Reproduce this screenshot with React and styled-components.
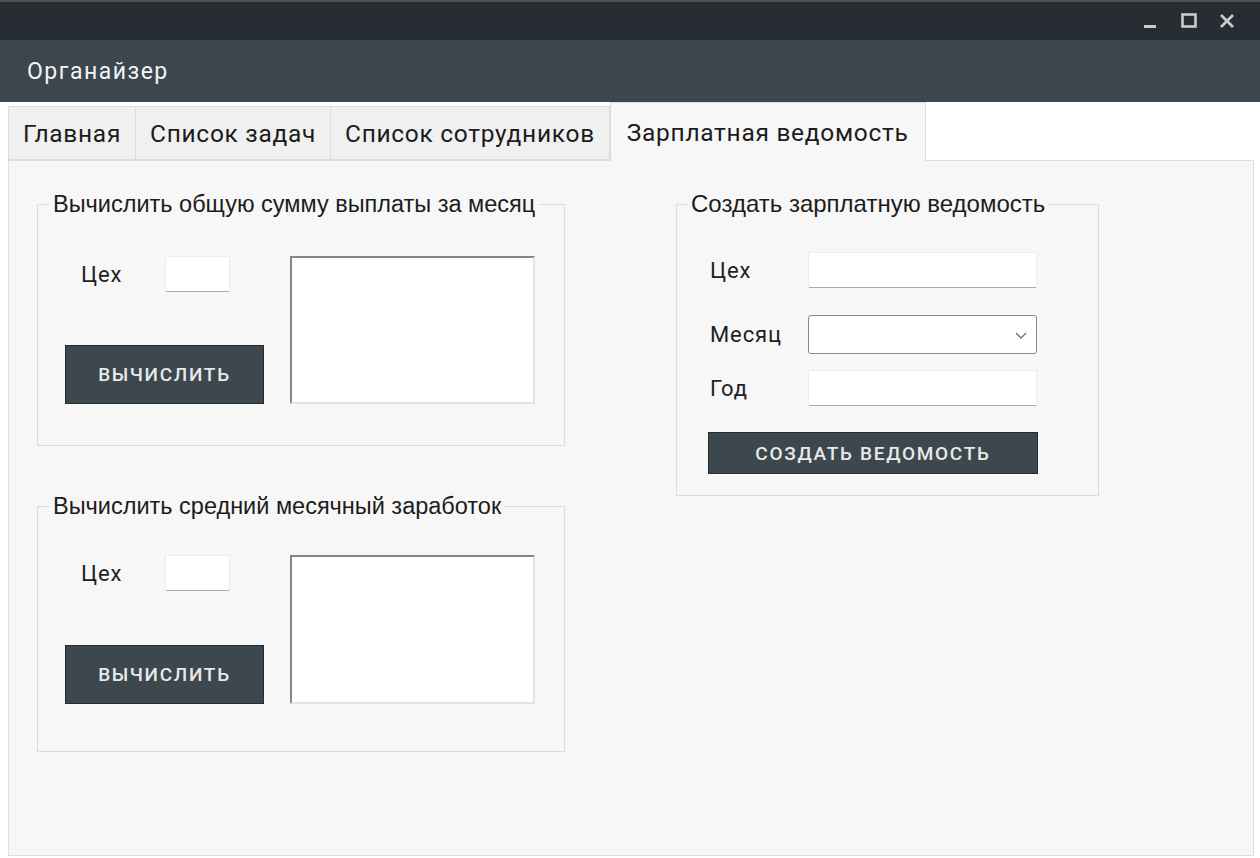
import React from "react";
import styled, { createGlobalStyle } from "styled-components";

const GlobalStyle = createGlobalStyle`
  html, body {
    margin: 0;
    padding: 0;
    background: #ffffff;
  }
  body {
    font-family: Roboto, "Noto Sans", "Liberation Sans", sans-serif;
    color: #1f1f1f;
  }
`;

// window chrome
const Window = styled.div`
  width: 1260px;
  height: 858px;
  display: flex;
  flex-direction: column;
  overflow: hidden;
`;

const TitleBar = styled.div`
  height: 40px;
  flex: none;
  background: #272d33;
  border-top: 2px solid #4a4f54;
  box-sizing: border-box;
  display: flex;
  justify-content: flex-end;
  align-items: center;
  gap: 20px;
  padding-right: 24px;
`;

const ControlIcon = styled.svg`
  width: 18px;
  height: 18px;
  display: block;
`;

const Header = styled.div`
  height: 62px;
  flex: none;
  background: #3b464e;
  display: flex;
  align-items: center;
  padding-left: 27px;
  color: #f4f4f4;
  font-size: 23px;
  letter-spacing: 1.5px;
`;

// tabs
const TabStrip = styled.div`
  display: flex;
  align-items: flex-end;
  height: 58px;
  flex: none;
  padding-left: 8px;
`;

const Tab = styled.div`
  box-sizing: border-box;
  height: ${(p) => (p.$active ? "59px" : "54px")};
  margin-bottom: ${(p) => (p.$active ? "-1px" : "0")};
  padding: 0 ${(p) => (p.$active ? "16px" : "14px")};
  display: flex;
  align-items: center;
  font-size: 24.5px;
  letter-spacing: 0.7px;
  white-space: nowrap;
  color: #1c1c1c;
  background: ${(p) => (p.$active ? "#f7f7f7" : "#f0f0f0")};
  border: 1px solid #dcdcdc;
  border-bottom: ${(p) => (p.$active ? "none" : "1px solid #dcdcdc")};
  border-left: ${(p) => (p.$first || p.$active ? "1px solid #dcdcdc" : "none")};
  position: relative;
  z-index: ${(p) => (p.$active ? 1 : 0)};
`;

const Panel = styled.div`
  flex: 1;
  margin: 0 6px 2px 8px;
  background: #f7f7f7;
  border: 1px solid #dedede;
  display: grid;
  grid-template-columns: 528px 423px;
  column-gap: 111px;
  align-items: start;
  padding: 31px 0 0 28px;
`;

const Column = styled.div`
  display: flex;
  flex-direction: column;
  gap: ${(p) => p.$gap || 0}px;
`;

// groups
const Group = styled.fieldset`
  margin: 0;
  border: 1px solid #dcdcdc;
  padding: ${(p) => p.$pad};
  min-width: 0;
`;

const Legend = styled.legend`
  font-family: "Liberation Sans", Arial, sans-serif;
  font-size: ${(p) => p.$size}px;
  line-height: 24px;
  white-space: nowrap;
  padding: 0 3px;
  margin-left: ${(p) => p.$shift}px;
  color: #1c1c1c;
`;

const CalcBody = styled.div`
  display: grid;
  grid-template-columns: 199px 245px;
  column-gap: 26px;
`;

const CalcLeft = styled.div`
  display: flex;
  flex-direction: column;
  justify-content: space-between;
`;

const FieldRow = styled.div`
  display: flex;
  align-items: center;
  padding-left: 16px;
`;

const Label = styled.span`
  font-size: 22px;
  letter-spacing: 0.9px;
  width: ${(p) => p.$w}px;
  flex: none;
`;

const TextBox = styled.input`
  box-sizing: border-box;
  width: ${(p) => p.$w}px;
  height: 36px;
  border: 1px solid #ececec;
  border-bottom: 1px solid #a9a9a9;
  border-radius: 2px;
  background: #ffffff;
  outline: none;
  font-family: inherit;
  font-size: 18px;
  padding: 0 8px;
`;

const ActionButton = styled.button`
  box-sizing: border-box;
  width: ${(p) => p.$w}px;
  height: ${(p) => p.$h}px;
  background: #3d474e;
  border: 1px solid #262c31;
  color: #e9e9e9;
  font-family: Roboto, "Noto Sans", sans-serif;
  font-size: 19px;
  font-weight: 500;
  letter-spacing: 1.7px;
  cursor: pointer;
  padding: 0;
`;

const ResultArea = styled.textarea`
  box-sizing: border-box;
  width: 245px;
  height: ${(p) => p.$h}px;
  resize: none;
  background: #ffffff;
  border-style: solid;
  border-width: 2px;
  border-color: #858585 #e3e3e3 #e3e3e3 #858585;
  outline: none;
  font-family: inherit;
  font-size: 16px;
`;

const FormRow = styled.div`
  display: flex;
  align-items: center;
  margin-top: ${(p) => p.$top}px;
  padding-left: 2px;
`;

const SelectBox = styled.div`
  box-sizing: border-box;
  width: 229px;
  height: 39px;
  background: #ffffff;
  border: 1px solid #8a8a8a;
  border-radius: 3px;
  display: flex;
  align-items: center;
  justify-content: flex-end;
  padding-right: 8px;
`;

const Chevron = styled.svg`
  width: 14px;
  height: 14px;
  display: block;
`;

const SubmitWrap = styled.div`
  margin-top: 26px;
`;

const CalcGroup = ({ title, pad, areaH }) => (
  <Group $pad={pad}>
    <Legend $shift={-15} $size={23.5}>{title}</Legend>
    <CalcBody>
      <CalcLeft>
        <FieldRow>
          <Label $w={84}>Цех</Label>
          <TextBox $w={65} />
        </FieldRow>
        <ActionButton $w={199} $h={59}>ВЫЧИСЛИТЬ</ActionButton>
      </CalcLeft>
      <ResultArea $h={areaH} />
    </CalcBody>
  </Group>
);

const TABS = ["Главная", "Список задач", "Список сотрудников", "Зарплатная ведомость"];

const App = () => {
  return (
    <Window>
      <GlobalStyle />
      <TitleBar>
        <ControlIcon viewBox="0 0 18 18">
          <rect x="2" y="13" width="12" height="3" fill="#c9cbcd" />
        </ControlIcon>
        <ControlIcon viewBox="0 0 18 18">
          <rect x="2.5" y="2.5" width="13" height="12" fill="none" stroke="#c9cbcd" strokeWidth="2.6" />
        </ControlIcon>
        <ControlIcon viewBox="0 0 18 18">
          <path d="M3 3 L15 15 M15 3 L3 15" stroke="#c9cbcd" strokeWidth="2.8" />
        </ControlIcon>
      </TitleBar>
      <Header>Органайзер</Header>
      <TabStrip>
        {TABS.map((t, i) => (
          <Tab key={t} $first={i === 0} $active={i === TABS.length - 1}>
            {t}
          </Tab>
        ))}
      </TabStrip>
      <Panel>
        <Column $gap={48}>
          <CalcGroup title="Вычислить общую сумму выплаты за месяц" pad="40px 30px 41px 27px" areaH={148} />
          <CalcGroup title="Вычислить средний месячный заработок" pad="37px 30px 47px 27px" areaH={149} />
        </Column>
        <Group $pad="36px 61px 21px 31px">
          <Legend $shift={-20} $size={24}>Создать зарплатную ведомость</Legend>
          <FormRow $top={0}>
            <Label $w={98}>Цех</Label>
            <TextBox $w={229} />
          </FormRow>
          <FormRow $top={27}>
            <Label $w={98}>Месяц</Label>
            <SelectBox>
              <Chevron viewBox="0 0 14 14">
                <path d="M2 5 L7 10 L12 5" fill="none" stroke="#6f6f6f" strokeWidth="1.3" />
              </Chevron>
            </SelectBox>
          </FormRow>
          <FormRow $top={16}>
            <Label $w={98}>Год</Label>
            <TextBox $w={229} />
          </FormRow>
          <SubmitWrap>
            <ActionButton $w={330} $h={42}>СОЗДАТЬ ВЕДОМОСТЬ</ActionButton>
          </SubmitWrap>
        </Group>
      </Panel>
    </Window>
  );
};

export default App;
